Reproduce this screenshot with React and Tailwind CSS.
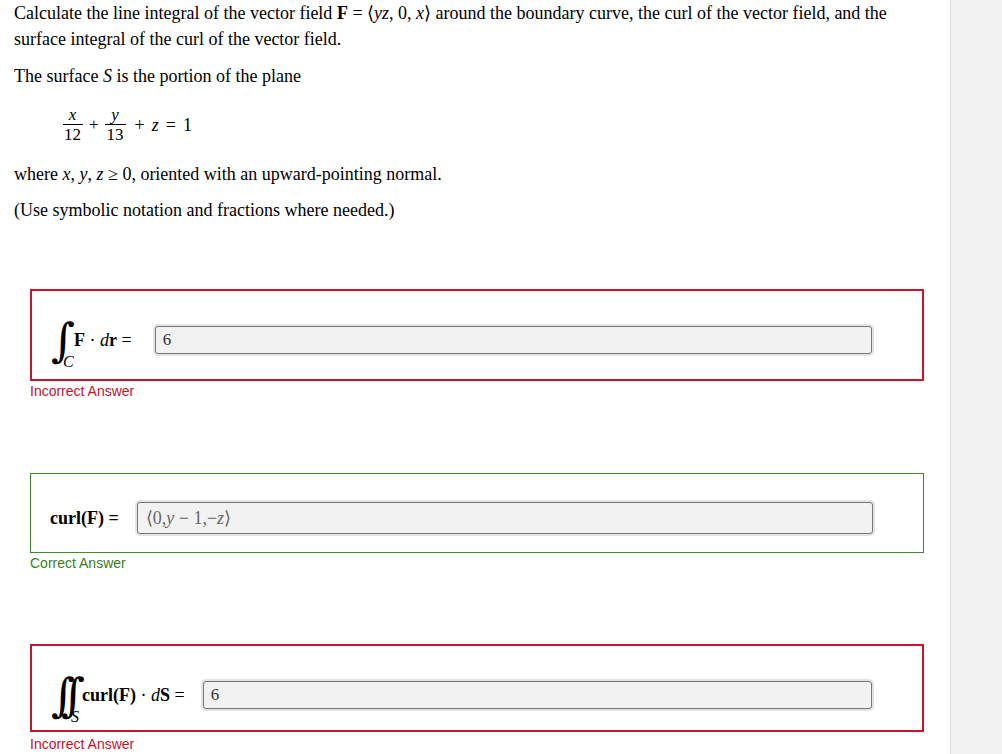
export default function App() {
  const serif = "font-['Liberation_Serif','Times_New_Roman',serif]";
  const mathInt = "font-['DejaVu_Serif','Liberation_Serif',serif]";
  const sans = "font-['Liberation_Sans',Arial,sans-serif]";
  return (
    <div className="flex min-h-[754px] w-[1002px] bg-white">
      <div className={`w-[950px] shrink-0 pl-[14px] pr-[10px] text-[18px] text-black ${serif}`}>
        <p className={`leading-[26px] ${serif}`}>
          Calculate the line integral of the vector field <b>F</b> = ⟨<i>yz</i>, 0, <i>x</i>⟩ around the boundary curve, the curl of the vector field, and the surface integral of the curl of the vector field.
        </p>
        <p className={`mt-[11px] leading-[26px] ${serif}`}>
          The surface <i>S</i> is the portion of the plane
        </p>
        <div className={`ml-[48px] mt-[17px] flex items-center text-[17px] ${serif}`}>
          <span className="inline-flex flex-col items-center">
            <span className="px-[2px] leading-[18px] italic">x</span>
            <span className="h-px w-[20px] bg-black" />
            <span className="px-[2px] leading-[19px]">12</span>
          </span>
          <span className="mx-[6px]">+</span>
          <span className="inline-flex flex-col items-center">
            <span className="px-[2px] leading-[18px] italic">y</span>
            <span className="h-px w-[21px] bg-black" />
            <span className="px-[2px] leading-[19px]">13</span>
          </span>
          <span className="ml-[9px] flex items-center gap-[7px] text-[18px]">
            <span>+</span>
            <i>z</i>
            <span>=</span>
            <span>1</span>
          </span>
        </div>
        <p className={`mt-[17px] leading-[26px] ${serif}`}>
          where <i>x</i>, <i>y</i>, <i>z</i> ≥ 0, oriented with an upward-pointing normal.
        </p>
        <p className={`mt-[10px] leading-[26px] ${serif}`}>(Use symbolic notation and fractions where needed.)</p>

        {/* Box 1 */}
        <div className="ml-[16px] mr-[16px] mt-[66px] flex h-[92px] items-center border-2 border-[#d0112b] pl-[20px] pr-[50px] pt-[10px]">
          <div className="flex items-center">
            <span className="relative inline-block h-[46px] w-[22px] shrink-0">
              <span className={`absolute -left-[1px] top-0 text-[46px] leading-[46px] ${mathInt}`}>∫</span>
              <span className={`absolute -bottom-[7px] left-[11px] text-[16px] italic leading-[16px] ${serif}`}>C</span>
            </span>
            <span className={`text-[18px] ${serif}`}>
              <b>F</b> · <i>d</i>
              <b>r</b> =
            </span>
          </div>
          <div className={`ml-[23px] flex h-[28px] flex-1 items-center rounded-[3px] border border-[#777] bg-[#f2f2f2] px-[7px] text-[17px] text-[#333] shadow-[0_0_0_2px_#e3e3e3] ${serif}`}>
            6
          </div>
        </div>
        <div className={`ml-[16px] text-[14px] leading-[20px] text-[#c8102e] ${sans}`}>Incorrect Answer</div>

        {/* Box 2 */}
        <div className="ml-[16px] mr-[16px] mt-[72px] flex h-[80px] items-center border border-[#3e8a2c] pl-[19px] pr-[50px] pt-[10px]">
          <span className={`text-[18px] font-bold ${serif}`}>curl(F) =</span>
          <div className={`ml-[18px] flex h-[32px] flex-1 items-center rounded-[3px] border border-[#777] bg-[#f2f2f2] px-[8px] text-[18px] text-[#666] shadow-[0_0_0_2px_#e3e3e3] ${serif}`}>
            ⟨0,<i>y</i>&nbsp;−&nbsp;1,−<i>z</i>⟩
          </div>
        </div>
        <div className={`ml-[16px] text-[14px] leading-[20px] text-[#3a7d22] ${sans}`}>Correct Answer</div>

        {/* Box 3 */}
        <div className="ml-[16px] mr-[16px] mt-[71px] flex h-[88px] items-center border-2 border-[#d0112b] pl-[20px] pr-[50px] pt-[14px]">
          <div className="flex items-center">
            <span className="relative inline-block h-[46px] w-[30px] shrink-0">
              <span className={`absolute -left-[1px] top-0 text-[46px] leading-[46px] ${mathInt}`}>∫</span>
              <span className={`absolute left-[9px] top-0 text-[46px] leading-[46px] ${mathInt}`}>∫</span>
              <span className={`absolute -bottom-[7px] left-[19px] text-[16px] italic leading-[16px] ${serif}`}>S</span>
            </span>
            <span className={`text-[18px] ${serif}`}>
              <b>curl(F)</b> · <i>d</i>
              <b>S</b> =
            </span>
          </div>
          <div className={`ml-[18px] flex h-[28px] flex-1 items-center rounded-[3px] border border-[#777] bg-[#f2f2f2] px-[7px] text-[17px] text-[#333] shadow-[0_0_0_2px_#e3e3e3] ${serif}`}>
            6
          </div>
        </div>
        <div className={`ml-[16px] mt-[2px] text-[14px] leading-[20px] text-[#c8102e] ${sans}`}>Incorrect Answer</div>
      </div>
      <div className="flex-1 border-l border-[#dedede] bg-[#f2f2f2]" />
    </div>
  );
}
